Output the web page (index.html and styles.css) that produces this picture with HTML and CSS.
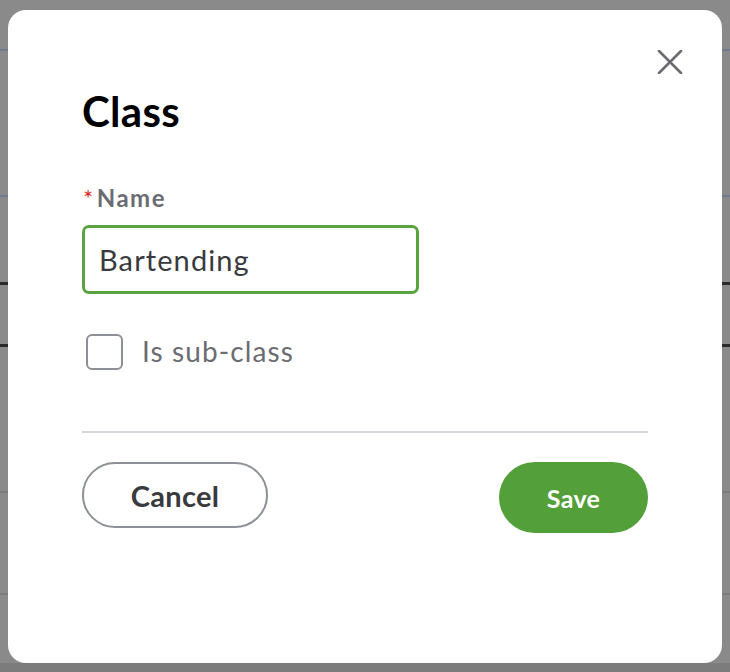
FILE: index.html
```html
<!DOCTYPE html>
<html lang="en">
<head>
<meta charset="utf-8">
<title>Class</title>
<link rel="stylesheet" href="styles.css">
</head>
<body>
<div class="backdrop">
  <div class="modal" role="dialog" aria-labelledby="dlg-title">
    <div class="close-row">
      <button class="close" aria-label="Close">
        <svg width="26" height="24" viewBox="0 0 26 24" aria-hidden="true">
          <path d="M2 1 L24 23 M24 1 L2 23" stroke="#6b6c72" stroke-width="2.6" fill="none" stroke-linecap="round"/>
        </svg>
      </button>
    </div>
    <h1 class="title" id="dlg-title">Class</h1>
    <label class="field-label" for="name"><span class="req">*</span>Name</label>
    <div class="input">Bartending</div>
    <div class="check-row">
      <span class="checkbox"></span>
      <span class="check-label">Is sub-class</span>
    </div>
    <div class="divider"></div>
    <div class="actions">
      <button class="btn btn-cancel">Cancel</button>
      <button class="btn btn-save">Save</button>
    </div>
  </div>
</div>
</body>
</html>
```
FILE: styles.css
```css
* { box-sizing: border-box; }
html, body { margin: 0; padding: 0; }
body {
  width: 730px;
  height: 672px;
  overflow: hidden;
  font-family: Lato, "Open Sans", sans-serif;
  background: #8a8a8b;
}
.backdrop {
  width: 730px;
  height: 672px;
  padding: 10px 8px 0 8px;
  background:
    linear-gradient(#6f7a8c, #6f7a8c) 0 49px / 100% 2px no-repeat,
    linear-gradient(#6f7a8c, #6f7a8c) 0 195px / 100% 2px no-repeat,
    linear-gradient(#2a2a2a, #2a2a2a) 0 282px / 100% 3px no-repeat,
    linear-gradient(#2a2a2a, #2a2a2a) 0 344px / 100% 3px no-repeat,
    linear-gradient(#7b7c7e, #7b7c7e) 0 491px / 100% 2px no-repeat,
    linear-gradient(#7b7c7e, #7b7c7e) 0 593px / 100% 2px no-repeat,
    linear-gradient(#7c7c7c, #7c7c7c) 0 663px / 100% 9px no-repeat,
    #8a8a8b;
}
.modal {
  width: 714px;
  height: 653px;
  background: #ffffff;
  border-radius: 18px;
  padding: 41px 39px 0 74px;
}
.close-row {
  display: flex;
  justify-content: flex-end;
  height: 22px;
}
.close {
  border: 0;
  background: none;
  padding: 0;
  width: 26px;
  height: 24px;
  margin-top: -1px;
  cursor: pointer;
}
.close svg { display: block; }
.title {
  margin: 17px 0 0 0;
  font-size: 42px;
  line-height: 42px;
  font-weight: 700;
  color: #000000;
  letter-spacing: 0.3px;
}
.field-label {
  display: block;
  margin-top: 54px;
  font-size: 24px;
  line-height: 24px;
  font-weight: 700;
  color: #6b6c72;
  letter-spacing: 1.5px;
}
.req {
  color: #d52b1e;
  font-weight: 400;
  margin-right: 2px;
  margin-left: 1px;
}
.input {
  margin-top: 15px;
  width: 337px;
  height: 69px;
  border: 3px solid #5aa33e;
  border-radius: 7px;
  padding-left: 14px;
  display: flex;
  align-items: center;
  font-size: 29px;
  color: #393a3d;
  letter-spacing: 1.1px;
}
.check-row {
  display: flex;
  align-items: center;
  margin-top: 40px;
  padding-left: 4px;
  height: 36px;
}
.checkbox {
  width: 37px;
  height: 36px;
  border: 2px solid #8d9096;
  border-radius: 6px;
  flex: none;
}
.check-label {
  margin-left: 19px;
  margin-top: -3px;
  font-size: 28px;
  color: #6b6c72;
  letter-spacing: 1.1px;
}
.divider {
  margin-top: 61px;
  width: 566px;
  height: 2px;
  background: #d4d7dc;
}
.actions {
  margin-top: 29px;
  width: 566px;
  display: flex;
  justify-content: space-between;
  align-items: flex-start;
}
.btn {
  font-family: Lato, "Open Sans", sans-serif;
  font-weight: 700;
  border-radius: 40px;
  cursor: pointer;
  padding: 0;
}
.btn-cancel {
  width: 186px;
  height: 66px;
  background: #ffffff;
  border: 2px solid #8d9096;
  color: #393a3d;
  font-size: 29px;
  letter-spacing: 0.3px;
}
.btn-save {
  width: 149px;
  height: 71px;
  background: #53a03b;
  border: 0;
  color: #ffffff;
  font-size: 25px;
  letter-spacing: 0.3px;
}
```
